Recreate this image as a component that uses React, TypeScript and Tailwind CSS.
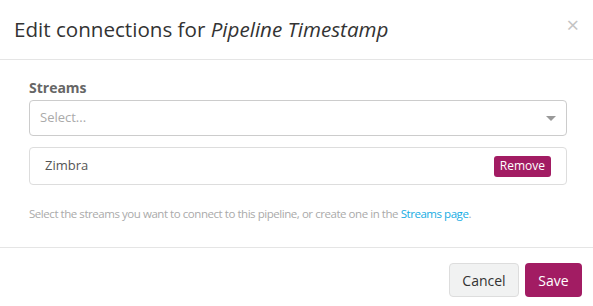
import React from 'react'

export default function App() {
  return (
    <div className="w-[593px] h-[306px] bg-white text-[#333] font-['Open_Sans',sans-serif] flex flex-col">
      {/* header */}
      <div className="h-[60px] flex items-center justify-between pl-[14px] pr-[14px] border-b border-[#e5e5e5]">
        <h4 className="text-[20.6px] leading-none text-[#333]">
          Edit connections for <em>Pipeline Timestamp</em>
        </h4>
        <button className="text-[#c4c4c4] text-[22px] leading-none -mt-[12px]">×</button>
      </div>

      {/* body */}
      <div className="h-[188px] pl-[29px] pr-[26px] pt-[18px] border-b border-[#e5e5e5]">
        <label className="block text-[14px] font-bold text-[#666] leading-[20px] mb-[2px]">Streams</label>
        <div className="h-[36px] flex items-center justify-between border border-[#ccc] rounded-[4px] pl-[10px] pr-[10px]">
          <span className="text-[13px] text-[#aaa]">Select...</span>
          <span className="w-0 h-0 border-l-[5px] border-r-[5px] border-t-[5px] border-l-transparent border-r-transparent border-t-[#999]" />
        </div>
        <div className="mt-[11px] h-[38px] flex items-center justify-between border border-[#ddd] rounded-[4px] pl-[15px] pr-[15px]">
          <span className="text-[13px] text-[#555]">Zimbra</span>
          <button className="h-[21px] px-[6px] rounded-[3px] bg-[#a21c63] text-white text-[12px] leading-none">Remove</button>
        </div>
        <p className="mt-[20px] text-[11.5px] tracking-[-0.45px] text-[#aaa]">
          Select the streams you want to connect to this pipeline, or create one in the{' '}
          <a className="text-[#16ace3]">Streams page</a>.
        </p>
      </div>

      {/* footer */}
      <div className="flex justify-end items-start gap-[6px] pt-[15px] pr-[11px]">
        <button className="h-[34px] w-[70px] rounded-[4px] bg-[#f1f2f2] border border-[#ddd] text-[14px] text-[#333]">Cancel</button>
        <button className="h-[34px] w-[57px] rounded-[4px] bg-[#a21c63] text-[14px] text-white">Save</button>
      </div>
    </div>
  )
}
